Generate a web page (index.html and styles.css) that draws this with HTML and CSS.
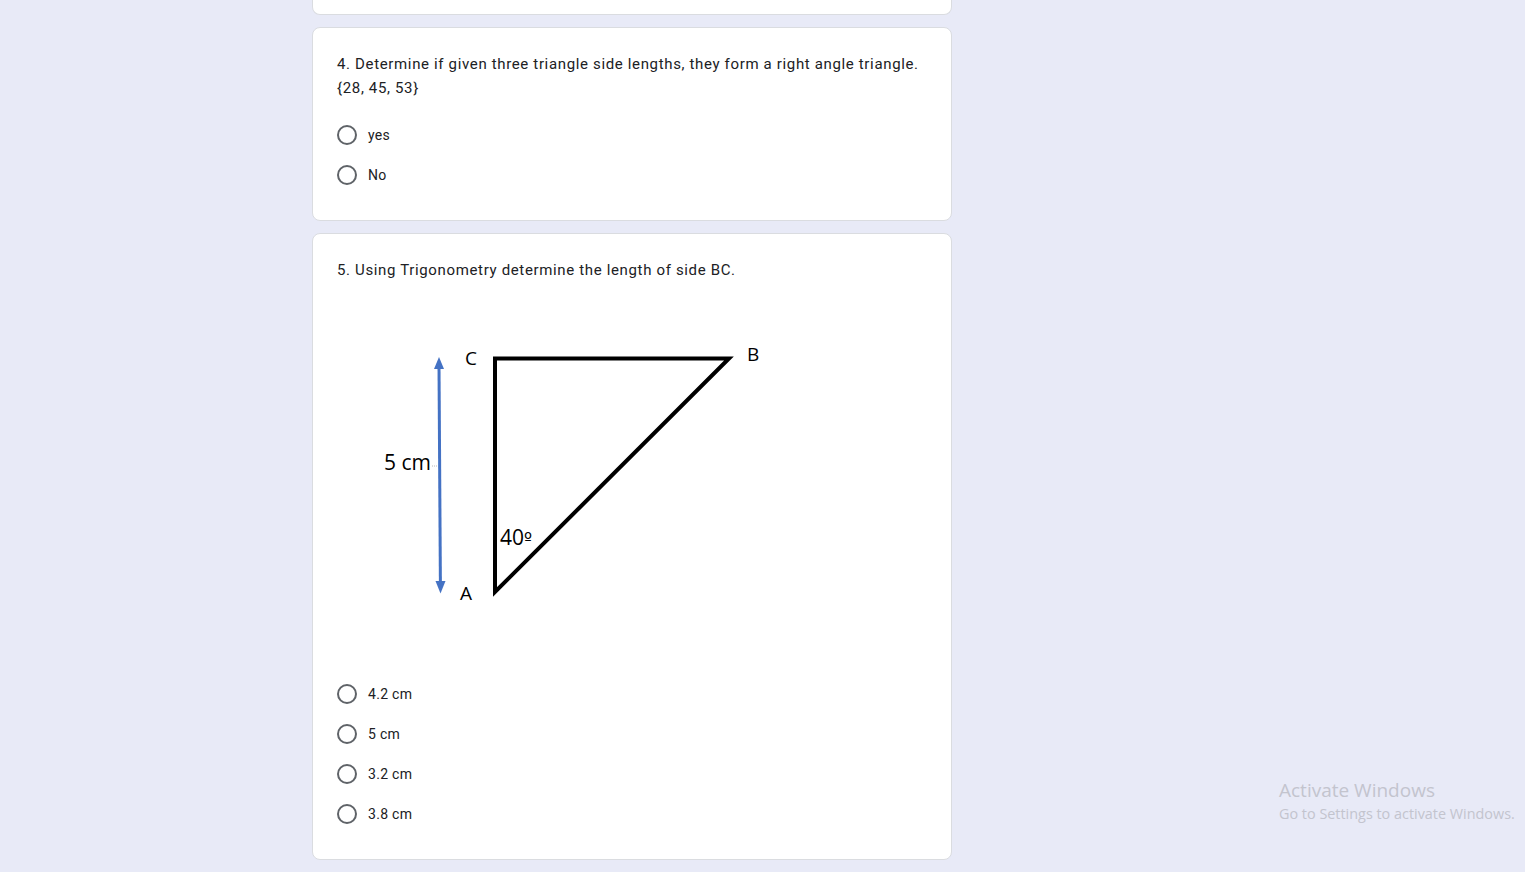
FILE: index.html
```html
<!DOCTYPE html>
<html lang="en">
<head>
<meta charset="utf-8">
<title>Quiz</title>
<link rel="stylesheet" href="styles.css">
</head>
<body>
<main class="form">
  <section class="card card-stub"></section>

  <section class="card">
    <div class="q-title">4. Determine if given three triangle side lengths, they form a right angle triangle.<br>{28, 45, 53}</div>
    <div class="options">
      <label class="option"><span class="radio"></span><span class="opt-text">yes</span></label>
      <label class="option"><span class="radio"></span><span class="opt-text">No</span></label>
    </div>
  </section>

  <section class="card">
    <div class="q-title">5. Using Trigonometry determine the length of side BC.</div>
    <div class="figure">
      <svg class="diagram" width="590" height="392" viewBox="0 0 590 392" xmlns="http://www.w3.org/2000/svg">
        <polygon points="158,76.5 392,76.5 158,310" fill="none" stroke="#000" stroke-width="4" stroke-linejoin="miter"/>
        <line x1="102" y1="84" x2="103.4" y2="302" stroke="#4472c4" stroke-width="3"/>
        <polygon points="102,75 97,87 107,87" fill="#4472c4"/>
        <polygon points="103.5,311.5 98.5,299 108.5,299" fill="#4472c4"/>
        <line x1="95" y1="184" x2="100" y2="184" stroke="#b8b8b8" stroke-width="1" stroke-dasharray="1,1"/>
        <text class="lbl" x="128" y="83">C</text>
        <text class="lbl" x="410" y="79">B</text>
        <text class="lbl" x="123" y="318">A</text>
        <text class="lbl big" x="47" y="188">5 cm</text>
        <text class="lbl big" x="163" y="263">40<tspan class="ord">º</tspan></text>
      </svg>
    </div>
    <div class="options">
      <label class="option"><span class="radio"></span><span class="opt-text">4.2 cm</span></label>
      <label class="option"><span class="radio"></span><span class="opt-text">5 cm</span></label>
      <label class="option"><span class="radio"></span><span class="opt-text">3.2 cm</span></label>
      <label class="option"><span class="radio"></span><span class="opt-text">3.8 cm</span></label>
    </div>
  </section>
</main>

<div class="activate">
  <div class="act-title">Activate Windows</div>
  <div class="act-sub">Go to Settings to activate Windows.</div>
</div>
</body>
</html>
```
FILE: styles.css
```css
html, body {
  margin: 0;
  padding: 0;
}

body {
  background: #e8eaf7;
  font-family: Roboto, "Liberation Sans", Arial, sans-serif;
  color: #202124;
  height: 872px;
  overflow: hidden;
}

.form {
  width: 640px;
  margin-left: 312px;
  display: flex;
  flex-direction: column;
  gap: 12px;
}

.card {
  background: #fff;
  border: 1px solid #dadce0;
  border-radius: 8px;
  padding: 24px;
}

.card-stub {
  height: 15px;
  padding: 0;
  border-top: none;
  border-radius: 0 0 8px 8px;
  box-sizing: border-box;
}

.q-title {
  font-size: 15px;
  line-height: 24px;
  letter-spacing: 0.65px;
  color: #202124;
}

.options {
  margin-top: 15px;
  padding-bottom: 1px;
  display: flex;
  flex-direction: column;
}

.figure + .options {
  margin-top: 0;
}

.option {
  height: 40px;
  display: flex;
  align-items: center;
}

.radio {
  width: 20px;
  height: 20px;
  box-sizing: border-box;
  border: 2px solid #5f6368;
  border-radius: 50%;
  flex: none;
}

.opt-text {
  margin-left: 11px;
  font-size: 14px;
  letter-spacing: 0.3px;
  color: #202124;
}

.figure {
  height: 392px;
}

.diagram {
  display: block;
}

.lbl {
  font-family: "Open Sans", "Liberation Sans", sans-serif;
  font-size: 19px;
  fill: #000;
}

.lbl.big {
  font-size: 21px;
}

.ord {
  font-family: "DejaVu Sans", sans-serif;
  font-size: 17px;
}

.activate {
  position: absolute;
  left: 1279px;
  top: 777px;
  font-family: "Open Sans", "Noto Sans", sans-serif;
  color: #c3c4ce;
}

.act-title {
  font-size: 19px;
  line-height: 27px;
}

.act-sub {
  font-size: 14.4px;
  line-height: 20px;
}
```
